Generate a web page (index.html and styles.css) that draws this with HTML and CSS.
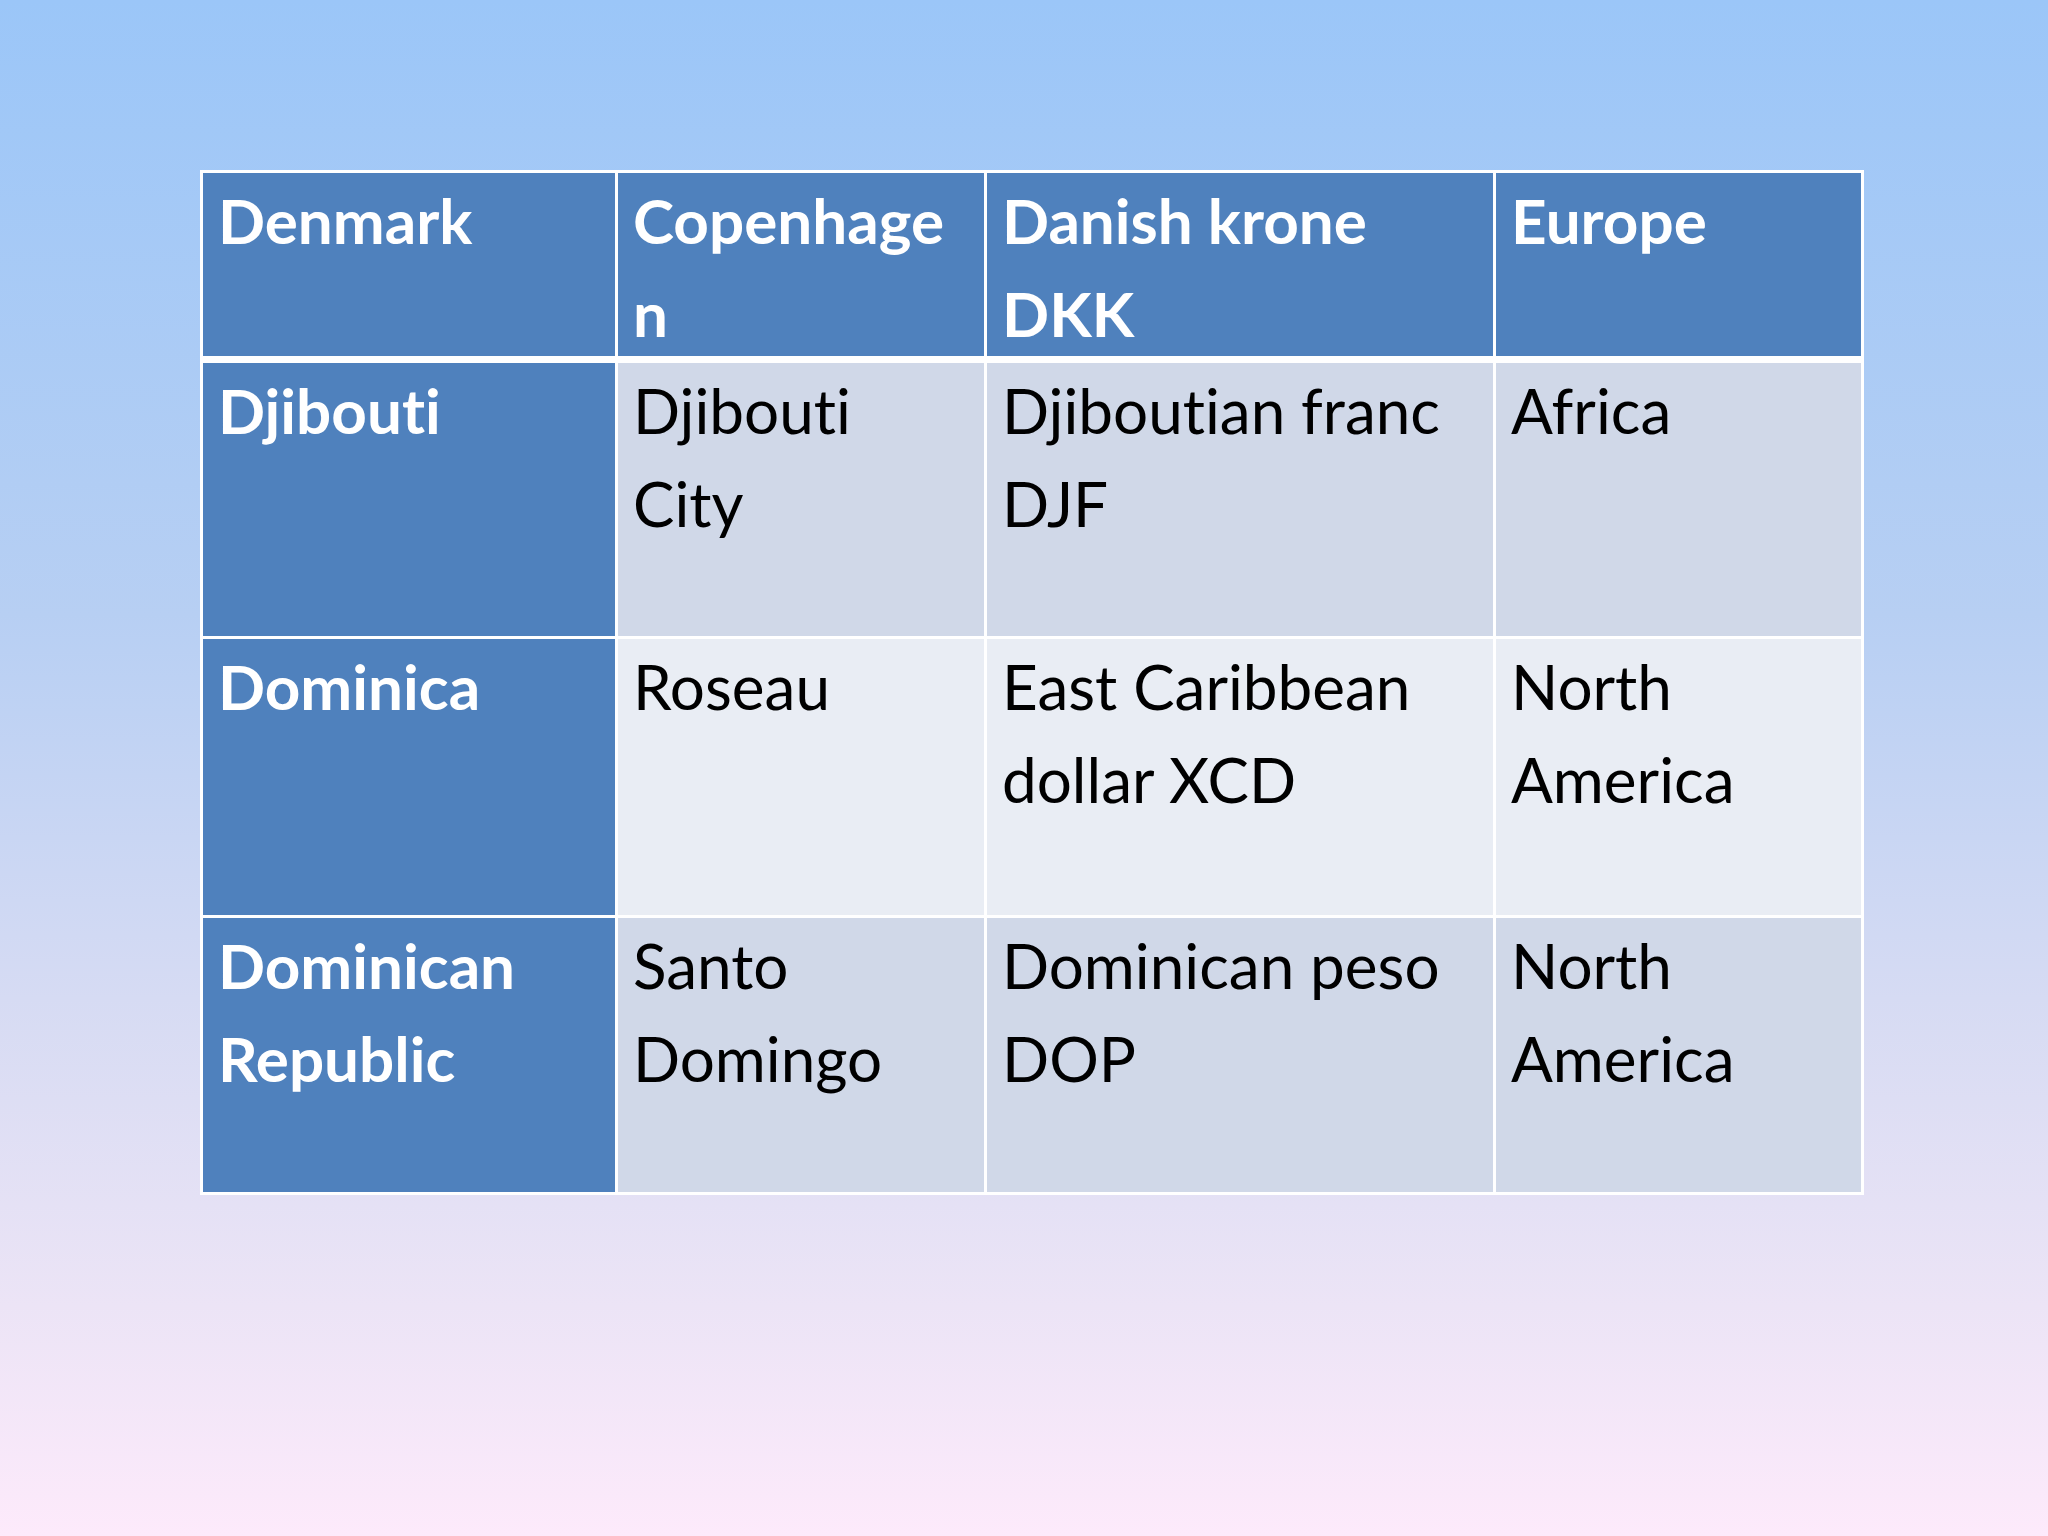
FILE: index.html
```html
<!DOCTYPE html>
<html lang="en">
<head>
<meta charset="utf-8">
<title>Countries</title>
<link rel="stylesheet" href="styles.css">
</head>
<body>
<div class="slide">
  <div class="grid">
    <div class="cell head first">Denmark</div>
    <div class="cell head">Copenhage<br>n</div>
    <div class="cell head">Danish krone<br>DKK</div>
    <div class="cell head">Europe</div>

    <div class="cell first">Djibouti</div>
    <div class="cell band1">Djibouti<br>City</div>
    <div class="cell band1">Djiboutian franc<br>DJF</div>
    <div class="cell band1">Africa</div>

    <div class="cell first">Dominica</div>
    <div class="cell band2">Roseau</div>
    <div class="cell band2">East Caribbean<br>dollar XCD</div>
    <div class="cell band2">North<br>America</div>

    <div class="cell first">Dominican<br>Republic</div>
    <div class="cell band1">Santo<br>Domingo</div>
    <div class="cell band1">Dominican peso<br>DOP</div>
    <div class="cell band1">North<br>America</div>
  </div>
</div>
</body>
</html>
```
FILE: styles.css
```css
html, body {
  margin: 0;
  padding: 0;
}

body {
  width: 2048px;
  height: 1536px;
  overflow: hidden;
  font-family: Lato, "Liberation Sans", sans-serif;
}

.slide {
  width: 2048px;
  height: 1536px;
  box-sizing: border-box;
  padding: 170px 0 0 200px;
  background: linear-gradient(to bottom, #9bc6f8 0%, #b7cff3 40%, #d6dbf3 65%, #ece4f6 85%, #fdeafb 100%);
}

.grid {
  display: grid;
  width: max-content;
  grid-template-columns: 412px 366px 506px 365px;
  grid-template-rows: 187px 273px 276px 274px;
  gap: 3px;
  padding: 3px;
  background: #ffffff;
}

.cell {
  box-sizing: border-box;
  padding: 1px 0 0 15px;
  font-size: 62px;
  line-height: 93px;
  white-space: nowrap;
  color: #000000;
  font-variant-ligatures: none;
  font-feature-settings: "liga" 0, "clig" 0;
}

.head {
  background: #4f81bd;
  color: #ffffff;
  font-weight: 700;
  margin-bottom: 4px;
}

.first {
  background: #4f81bd;
  color: #ffffff;
  font-weight: 700;
}

.band1 {
  background: #d0d8e8;
}

.band2 {
  background: #e9edf4;
}
```
